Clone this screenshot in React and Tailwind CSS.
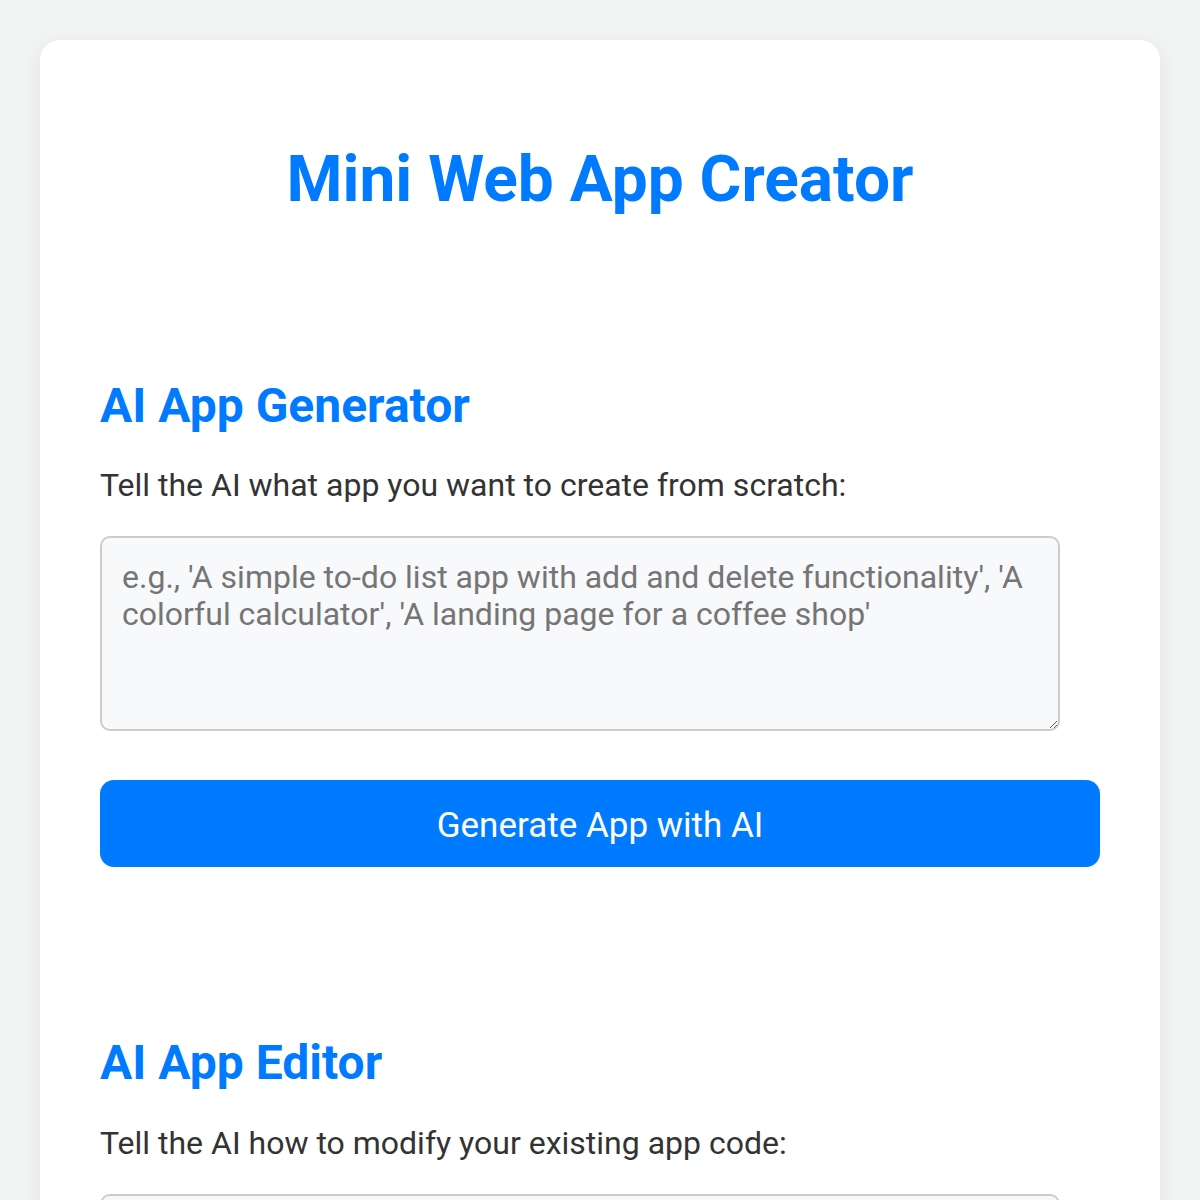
import React, { useState } from "react";

function Section({ title, label, placeholder, value, onChange, children }) {
  return (
    <section className="flex flex-col">
      <h2 className="text-[48px] leading-[1.2] font-bold text-[#007bff]">{title}</h2>
      <p className="mt-[27px] text-[32px] leading-[1.5] text-[#333]">{label}</p>
      <textarea
        value={value}
        onChange={onChange}
        placeholder={placeholder}
        className="mt-[27px] w-[960px] h-[195px] rounded-[10px] border-2 border-[#ccc] bg-[#f8f9fa] px-[20px] pt-[21px] pb-[20px] text-[32px] leading-[1.15] text-[#333] placeholder:text-[#757575] outline-none resize-y"
      />
      {children}
    </section>
  );
}

export default function App() {
  const [prompt, setPrompt] = useState("");
  const [edit, setEdit] = useState("");

  return (
    <div
      className="min-h-screen bg-[#f3f4f4] px-[40px] pt-[40px] pb-[40px]"
      style={{ fontFamily: "Roboto, 'Liberation Sans', sans-serif" }}
    >
      <div className="bg-white rounded-[20px] shadow-[0_4px_24px_rgba(0,0,0,0.08)] px-[60px] pt-[102px] pb-[60px]">
        <h1 className="text-center text-[64px] leading-[1.2] font-bold text-[#007bff]">
          Mini Web App Creator
        </h1>

        <div className="mt-[158px]">
          <Section
            title="AI App Generator"
            label="Tell the AI what app you want to create from scratch:"
            placeholder="e.g., 'A simple to-do list app with add and delete functionality', 'A colorful calculator', 'A landing page for a coffee shop'"
            value={prompt}
            onChange={(e) => setPrompt(e.target.value)}
          >
            <button className="mt-[49px] w-full h-[87px] rounded-[14px] bg-[#007bff] pt-[3px] text-white text-[35px] leading-none">
              Generate App with AI
            </button>
          </Section>
        </div>

        <div className="mt-[167px]">
          <Section
            title="AI App Editor"
            label="Tell the AI how to modify your existing app code:"
            placeholder="e.g., 'Change the background color to light blue', 'Add a button that says Hello'"
            value={edit}
            onChange={(e) => setEdit(e.target.value)}
          >
            <button className="mt-[49px] w-full h-[87px] rounded-[14px] bg-[#007bff] pt-[3px] text-white text-[35px] leading-none">
              Apply AI Edit
            </button>
          </Section>
        </div>
      </div>
    </div>
  );
}
